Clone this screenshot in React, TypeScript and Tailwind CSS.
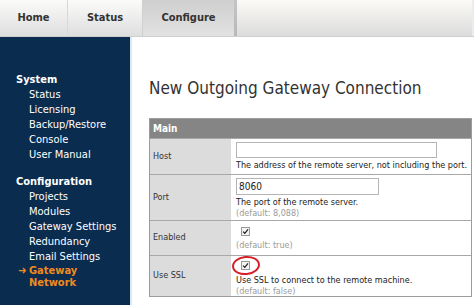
import React from "react";

const font = { fontFamily: '"DejaVu Sans Condensed", "DejaVu Sans", sans-serif' };

function Check() {
  return (
    <span className="flex h-[9px] w-[9px] items-center justify-center border border-[#9a9a9a] bg-[#f4f4f4]">
      <svg viewBox="0 0 10 10" className="h-[7px] w-[7px]">
        <path d="M1.5 5.2 L4 7.6 L8.6 2" fill="none" stroke="#222" strokeWidth="1.8" />
      </svg>
    </span>
  );
}

export default function App() {
  const sys = ["Status", "Licensing", "Backup/Restore", "Console", "User Manual"];
  const conf = ["Projects", "Modules", "Gateway Settings", "Redundancy", "Email Settings"];
  return (
    <div className="h-[305px] w-[474px] overflow-hidden bg-white" style={font}>
      {/* tab bar */}
      <div className="flex h-[37px] border-b border-[#cfcfcf]">
        <div className="flex w-[68px] items-center justify-center border-r border-[#d8d8d8] bg-gradient-to-b from-[#fbfbfa] to-[#dedede] text-[11px] font-bold text-[#333]">Home</div>
        <div className="flex w-[75px] items-center justify-center border-r border-[#d0d0d0] bg-gradient-to-b from-[#fbfbfa] to-[#dedede] text-[11px] font-bold text-[#333]">Status</div>
        <div className="flex w-[91px] items-center justify-center bg-gradient-to-b from-[#cfcfcf] to-[#e2e2e2] text-[11px] font-bold text-[#333]">Configure</div>
        <div className="w-[3px] bg-gradient-to-b from-[#c4c4c4] to-[#b8b8b8]" />
        <div className="flex-1 border-r-2 border-[#ececec] bg-gradient-to-b from-[#fbfaf6] to-[#dcdcdc]" />
      </div>
      <div className="flex h-[268px]">
        {/* sidebar */}
        <div className="w-[130px] bg-[#0a2c4f] pl-[16px] pt-[35px] text-[11px] text-white">
          <div className="font-bold leading-[15px]">System</div>
          <div className="flex flex-col pl-[13px] leading-[15px]">
            {sys.map((s) => (
              <div key={s}>{s}</div>
            ))}
          </div>
          <div className="mt-[12px] font-bold leading-[15px]">Configuration</div>
          <div className="flex flex-col pl-[13px] leading-[15px]">
            {conf.map((s) => (
              <div key={s}>{s}</div>
            ))}
            <div className="relative mt-[1px] font-bold leading-[12px] text-[#ef8a1e]">
              <span className="absolute left-[-11px] top-0">➜</span>
              Gateway
              <br />
              Network
            </div>
          </div>
        </div>
        {/* main */}
        <div className="flex-1 border-l-2 border-[#dbe9f5] pl-[17px] pr-[2px]">
          <h1 className="mt-[40px] text-[17px] leading-[22px] text-[#333]">New Outgoing Gateway Connection</h1>
          <div className="mt-[19px] border border-[#9c9c9c] text-[9px] text-[#222]">
            <div className="flex h-[19px] items-center bg-[#858585] pl-[3px] text-[10px] font-bold text-white">Main</div>
            <div className="flex h-[36px] border-t border-[#a8a8a8]">
              <div className="flex w-[81px] items-center bg-[#dcdcdc] pl-[3px] text-[#333]">Host</div>
              <div className="flex-1 pl-[5px] pt-[3px]">
                <div className="h-[16px] w-[201px] border border-[#b5b5b5] bg-white" />
                <div className="mt-[2px] leading-[11px]">The address of the remote server, not including the port.</div>
              </div>
            </div>
            <div className="flex h-[46px] border-t border-[#a8a8a8]">
              <div className="flex w-[81px] items-center bg-[#dcdcdc] pl-[3px] text-[#333]">Port</div>
              <div className="flex-1 pl-[5px] pt-[3px]">
                <div className="flex h-[17px] w-[143px] items-center border border-[#b5b5b5] bg-white pl-[2px] text-[10px] text-[#222]">8060</div>
                <div className="mt-[1px] leading-[12px]">The port of the remote server.</div>
                <div className="leading-[11px] text-[#9a9a9a]">(default: 8,088)</div>
              </div>
            </div>
            <div className="flex h-[35px] border-t border-[#a8a8a8]">
              <div className="flex w-[81px] items-center bg-[#dcdcdc] pl-[3px] text-[#333]">Enabled</div>
              <div className="flex-1 pl-[10px] pt-[6px]">
                <Check />
                <div className="-ml-[5px] mt-[4px] leading-[11px] text-[#9a9a9a]">(default: true)</div>
              </div>
            </div>
            <div className="flex h-[41px] border-t border-[#a8a8a8]">
              <div className="flex w-[81px] items-center bg-[#dcdcdc] pl-[3px] text-[#333]">Use SSL</div>
              <div className="relative flex-1 pl-[10px] pt-[5px]">
                <Check />
                <span className="absolute left-[1px] top-[0px] h-[19px] w-[28px] -rotate-6 rounded-[50%] border-2 border-[#d61f26]" />
                <div className="-ml-[5px] mt-[4px] leading-[12px]">Use SSL to connect to the remote machine.</div>
                <div className="-ml-[5px] leading-[11px] text-[#9a9a9a]">(default: false)</div>
              </div>
            </div>
          </div>
        </div>
      </div>
    </div>
  );
}
